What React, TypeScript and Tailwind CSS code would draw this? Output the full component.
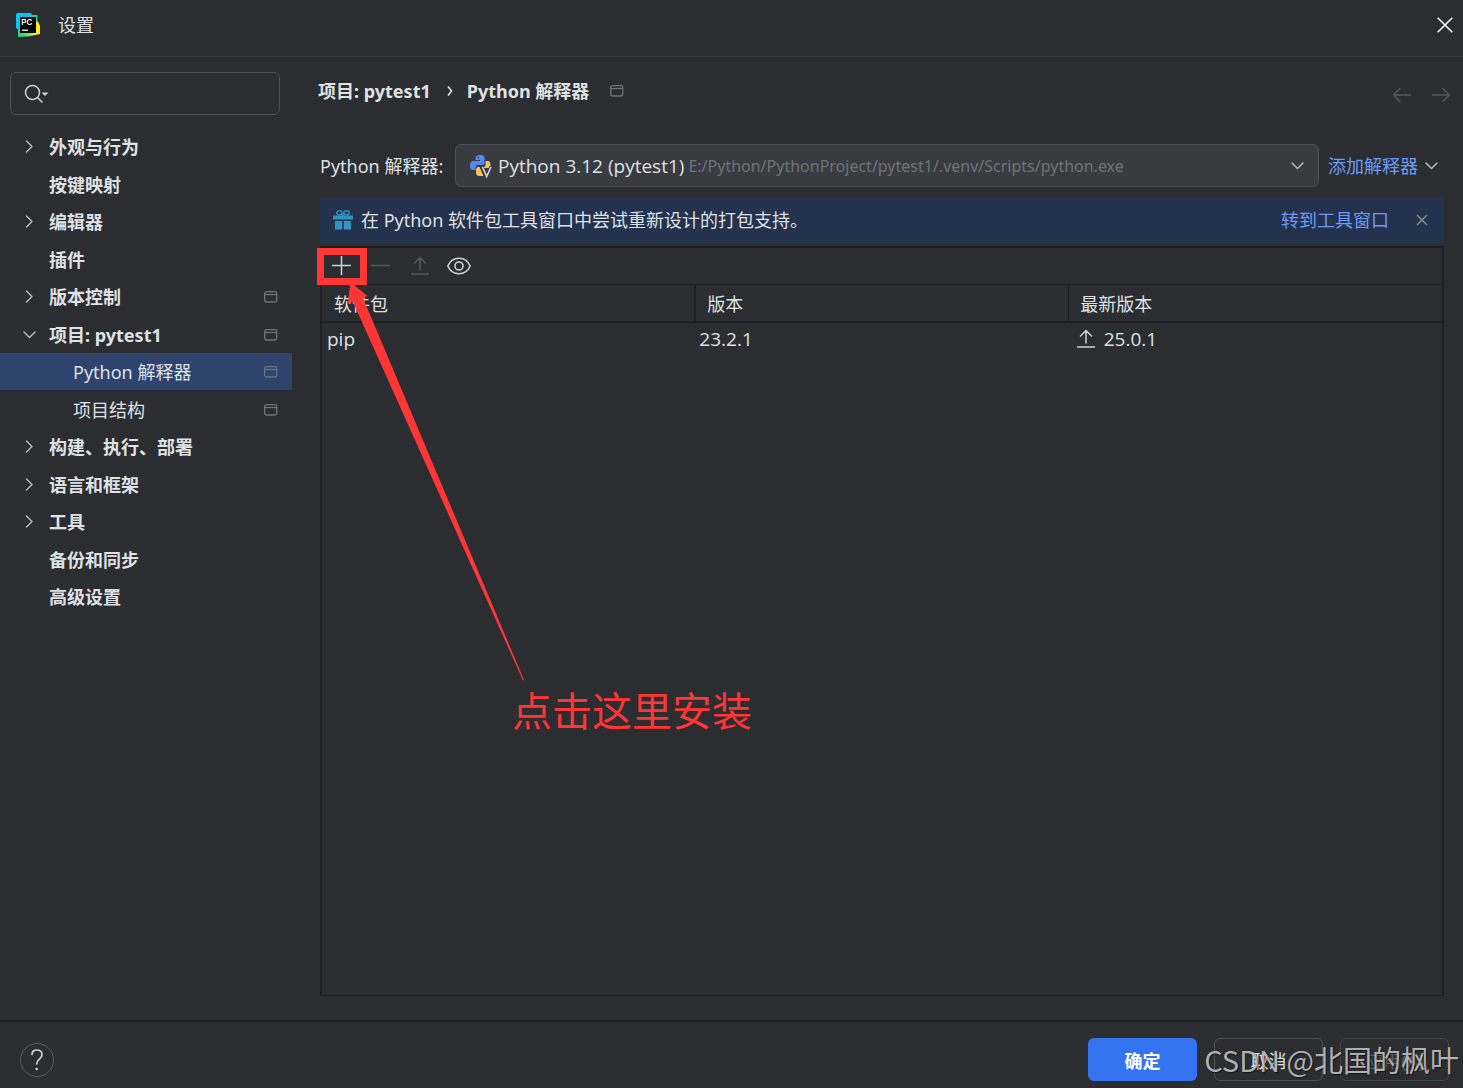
import type { ReactNode } from "react";

type TreeItem = {
  label: string;
  arrow?: "right" | "down";
  badge?: boolean;
  child?: boolean;
  selected?: boolean;
};

const items: TreeItem[] = [
  { label: "外观与行为", arrow: "right" },
  { label: "按键映射" },
  { label: "编辑器", arrow: "right" },
  { label: "插件" },
  { label: "版本控制", arrow: "right", badge: true },
  { label: "项目: pytest1", arrow: "down", badge: true },
  { label: "Python 解释器", child: true, selected: true, badge: true },
  { label: "项目结构", child: true, badge: true },
  { label: "构建、执行、部署", arrow: "right" },
  { label: "语言和框架", arrow: "right" },
  { label: "工具", arrow: "right" },
  { label: "备份和同步" },
  { label: "高级设置" },
];

function Chevron({ dir }: { dir: "right" | "down" }) {
  return (
    <svg className="size-4 shrink-0" viewBox="0 0 16 16" fill="none" stroke="#b4b8bf" strokeWidth="1.5" strokeLinecap="round" strokeLinejoin="round" aria-hidden="true">
      <path d={dir === "right" ? "M5.500 2 11 7.500 5.500 13" : "M3 5l5.500 5.500L14 5"} />
    </svg>
  );
}

function ScopeIcon() {
  return (
    <svg className="h-3 w-[14px] shrink-0" viewBox="0 0 14 12" fill="none" stroke="#6f737a" strokeWidth="1.300" aria-hidden="true">
      <rect x=".7" y=".7" width="12" height="10.300" rx="1.800" />
      <path d="M.7 3.500h12" />
    </svg>
  );
}

function UploadIcon({ color }: { color: string }) {
  return (
    <svg className="size-5 shrink-0" viewBox="0 0 20 20" fill="none" stroke={color} strokeWidth="1.500" strokeLinecap="round" strokeLinejoin="round" aria-hidden="true">
      <path d="M10 14V1.500M4.500 7 10 1.500 15.500 7M1.500 18h17" />
    </svg>
  );
}

function AppLogo() {
  return (
    <svg className="size-6" viewBox="0 0 24 24" aria-hidden="true">
      <defs>
        <linearGradient id="logo-green" x1="0" y1="1" x2="1" y2="0.400">
          <stop offset="0" stopColor="#12d68b" />
          <stop offset=".3" stopColor="#4bdc62" />
          <stop offset=".65" stopColor="#f0f020" />
          <stop offset="1" stopColor="#fcee1a" />
        </linearGradient>
      </defs>
      <path d="M14 2h7.500v7L14 12z" fill="#1fd78c" />
      <path d="M2 14 20 9l2-.5 2 4.500v8l-12 2.500L2 24z" fill="url(#logo-green)" />
      <path d="M0 1.500Q0 0 1.500 0H15l2 4-13 14-4-3z" fill="#0bc4f5" />
      <rect x="4" y="4" width="16" height="16" fill="#000" />
      <path d="M6 17.200h6" stroke="#fff" strokeWidth="1.300" />
      <text x="5.300" y="12" fill="#fff" fontFamily="Inter, sans-serif" fontSize="8" fontWeight="600">PC</text>
    </svg>
  );
}

function PythonIcon() {
  return (
    <svg className="size-6 shrink-0" viewBox="0 0 24 24" aria-hidden="true">
      <path d="M6.500 3.500Q6.500 1 11 1t4.500 2.500V9q0 2-2.500 2H9q-2.500 0-2.500 3v2H4Q1 16 1 11.500T4 7h7V6H6.500z" fill="#548af7" />
      <circle cx="9" cy="3.500" r=".9" fill="#34507f" />
      <path d="M16.500 7H19q2.500 0 2.500 4.500 0 1.500-.3 2.500H13l1.500 8H11q-4 0-4-3v-3.500q0-2.500 2.500-2.500H14q2.500 0 2.500-2.500z" fill="#f2c55c" />
      <path d="M12.500 12.500 17.500 24l5-11.500" fill="none" stroke="#393b40" strokeWidth="4" />
      <path d="M13.500 13 17.700 22.500 22 13" fill="none" stroke="#ced0d6" strokeWidth="1.700" />
    </svg>
  );
}

function ToolButton({ label, disabled, children }: { label: string; disabled?: boolean; children: ReactNode }) {
  return (
    <button type="button" aria-label={label} disabled={disabled} className="flex size-6 items-center justify-center">
      {children}
    </button>
  );
}

export default function App() {
  return (
    <div className="relative flex min-h-screen flex-col overflow-hidden bg-[#2b2d30] font-['Noto_Sans','Noto_Sans_CJK_SC',sans-serif] text-[18px] leading-6 text-[#dfe1e5]">
      <header className="flex h-[57px] items-center justify-between border-b border-[#393b40] pr-2 pb-[6px] pl-4">
        <div className="flex items-center gap-[18px]">
          <AppLogo />
          <h1>设置</h1>
        </div>
        <button type="button" aria-label="关闭" className="flex size-5 items-center justify-center">
          <svg className="size-4" viewBox="0 0 16 16" stroke="#fff" strokeWidth="1.500" aria-hidden="true">
            <path d="m.7.7 14.600 14.600M15.300.7.7 15.300" />
          </svg>
        </button>
      </header>

      <div className="flex flex-1">
        <aside className="w-[292px] shrink-0 pt-[15px]">
          <label className="mr-3 ml-[10px] flex h-[43px] items-center rounded-md border border-[#4e5157] pl-[13px]">
            <svg className="h-5 w-[26px] shrink-0" viewBox="0 0 26 20" fill="none" aria-hidden="true">
              <circle cx="8.500" cy="8.500" r="7" stroke="#ced0d6" strokeWidth="1.500" />
              <path d="m13.500 13.500 5 5" stroke="#ced0d6" strokeWidth="1.500" />
              <path d="M17.500 8.500h7l-3.500 3.500z" fill="#ced0d6" />
            </svg>
            <input type="search" aria-label="搜索" className="min-w-0 flex-1 bg-transparent px-2 outline-none" />
          </label>
          <nav aria-label="设置" className="mt-[13px]">
            <ul>
              {items.map((it) => (
                <li key={it.label} className="mb-px last:mb-0 nth-[2n]:mb-0">
                  <a
                    href="#"
                    aria-current={it.selected ? "page" : undefined}
                    className={`flex h-[37px] items-center pr-[14px] ${it.child ? "pl-[73px]" : "pl-[21px] font-bold"} ${it.selected ? "bg-[#2e436e]" : ""}`}
                  >
                    {!it.child && <span className="mr-3 flex size-4 items-center">{it.arrow && <Chevron dir={it.arrow} />}</span>}
                    <span className="flex-1">{it.label}</span>
                    {it.badge && <ScopeIcon />}
                  </a>
                </li>
              ))}
            </ul>
          </nav>
        </aside>

        <main className="flex min-w-0 flex-1 flex-col pr-[19px] pb-6 pl-7">
          <div className="-ml-0.5 flex h-[70px] items-center justify-between">
            <div className="flex items-center pb-0.5 font-bold">
              <span>项目: pytest1</span>
              <svg className="mr-[14px] ml-4 h-3 w-[6px]" viewBox="0 0 6 12" fill="none" stroke="#dfe1e5" strokeWidth="1.600" aria-hidden="true">
                <path d="m1 1.500 3.500 4.500L1 10.500" />
              </svg>
              <span className="mr-[21px]">Python 解释器</span>
              <ScopeIcon />
            </div>
            <div className="-mr-[7px] flex gap-[19px] pt-[6px]">
              {["后退", "前进"].map((label, i) => (
                <button key={label} type="button" aria-label={label} disabled className="size-5">
                  <svg viewBox="0 0 20 20" fill="none" stroke="#55585e" strokeWidth="1.500" strokeLinecap="round" strokeLinejoin="round" aria-hidden="true">
                    <path d={i === 0 ? "M18.500 10h-17M8 3.500 1.500 10 8 16.500" : "M1.500 10h17M12 3.500l6.500 6.500-6.500 6.500"} />
                  </svg>
                </button>
              ))}
            </div>
          </div>

          <div className="mt-[17px] mr-[5px] flex h-[43px] items-center whitespace-nowrap">
            <span className="w-[135px] shrink-0">Python 解释器:</span>
            <button type="button" aria-haspopup="listbox" className="flex h-[43px] min-w-0 flex-1 items-center rounded-md border border-[#4e5157] bg-[#393b40] px-[13px] text-left">
              <PythonIcon />
              <span className="ml-[5px] font-['Open_Sans',sans-serif] text-[19px]">Python 3.12 (pytest1)</span>
              <span className="ml-1 flex-1 truncate text-[16px] text-[#6f737a]">E:/Python/PythonProject/pytest1/.venv/Scripts/python.exe</span>
              <Chevron dir="down" />
            </button>
            <button type="button" className="ml-[9px] flex items-center gap-[5px] text-[#6b9bfa]">
              添加解释器
              <Chevron dir="down" />
            </button>
          </div>

          <div className="mt-[10px] flex h-[46px] items-center bg-[#25324d] pr-[14px] pl-[13px]">
            <svg className="mr-2 size-5" viewBox="0 0 20 20" fill="none" aria-hidden="true">
              <path d="M0 5.500h20v4H0zM2 11h7.200v8.500H2zM10.800 11H18v8.500h-7.200z" fill="#3592c4" />
              <ellipse cx="6.500" cy="2.800" rx="2.700" ry="2.100" stroke="#3592c4" strokeWidth="1.400" />
              <ellipse cx="13.500" cy="2.800" rx="2.700" ry="2.100" stroke="#3592c4" strokeWidth="1.400" />
              <path d="m8.500 4 1.500 1.500L11.500 4" stroke="#3592c4" strokeWidth="1.400" />
            </svg>
            <span className="flex-1">在 Python 软件包工具窗口中尝试重新设计的打包支持。</span>
            <a href="#" className="text-[#6b9bfa]">转到工具窗口</a>
            <button type="button" aria-label="关闭通知" className="ml-[25px] flex size-4 items-center justify-center">
              <svg className="size-3" viewBox="0 0 12 12" stroke="#868a91" strokeWidth="1.500" aria-hidden="true">
                <path d="m1 1 10 10M11 1 1 11" />
              </svg>
            </button>
          </div>

          <section className="mt-[3px] flex flex-1 flex-col border-2 border-b border-[#1e1f22]">
            <div className="flex h-[37px] items-center gap-[15px] border-b border-[#1e1f22] pl-2">
              <div className="relative size-6">
                <ToolButton label="安装">
                  <svg className="size-5" viewBox="0 0 20 20" stroke="#ced0d6" strokeWidth="1.500" aria-hidden="true">
                    <path d="M9.500 0v19M0 9.500h19" />
                  </svg>
                </ToolButton>
                <div className="pointer-events-none absolute -top-[6px] -left-[13px] h-[37px] w-[50px] border-[7px] border-[#ff3636]" />
                <svg className="pointer-events-none absolute top-[31px] left-[18px] z-10 h-[396px] w-[177px]" viewBox="0 0 177 396" fill="#ff3636" aria-hidden="true">
                  <path d="M2 0h4l13.500 11-4.500 2L176 395l-1 .5L5 17l-5 1z" />
                </svg>
                <p className="absolute top-[427px] left-[182px] z-10 text-[40px] leading-[60px] whitespace-nowrap text-[#ff3636]">点击这里安装</p>
              </div>
              <ToolButton label="卸载" disabled>
                <svg className="size-5" viewBox="0 0 20 20" stroke="#55585e" strokeWidth="1.500" aria-hidden="true">
                  <path d="M0 9.500h19" />
                </svg>
              </ToolButton>
              <ToolButton label="升级" disabled>
                <UploadIcon color="#55585e" />
              </ToolButton>
              <ToolButton label="显示早期版本">
                <svg className="size-6" viewBox="0 0 24 24" fill="none" stroke="#ced0d6" strokeWidth="1.600" aria-hidden="true">
                  <path d="M.8 12C3 7 7 4.200 12 4.200S21 7 23.200 12C21 17 17 19.800 12 19.800S3 17 .8 12z" />
                  <circle cx="12" cy="12" r="4" />
                </svg>
              </ToolButton>
            </div>
            <table className="w-full table-fixed border-collapse text-left">
              <thead>
                <tr className="h-[37px] border-b-2 border-[#1e1f22]">
                  <th className="border-r-2 border-[#1e1f22] pt-0.5 pl-3 font-normal">软件包</th>
                  <th className="border-r border-[#1e1f22] pt-0.5 pl-[11px] font-normal">版本</th>
                  <th className="pt-0.5 pl-[11px] font-normal">最新版本</th>
                </tr>
              </thead>
              <tbody className="font-['Open_Sans',sans-serif] text-[19px]">
                <tr className="h-8">
                  <td className="pl-[5px]">pip</td>
                  <td className="pl-1">23.2.1</td>
                  <td className="pl-[7px]">
                    <span className="flex items-center gap-2">
                      <UploadIcon color="#ced0d6" />
                      25.0.1
                    </span>
                  </td>
                </tr>
              </tbody>
            </table>
          </section>
        </main>
      </div>

      <footer className="flex h-[68px] items-center justify-between border-t-2 border-[#1e1f22] pt-3 pr-[14px] pb-[3px] pl-5">
        <button type="button" aria-label="帮助" className="flex size-[34px] items-center justify-center rounded-full border border-[#5a5d63]">
          <svg className="h-[22px] w-3" viewBox="0 0 12 22" fill="none" stroke="#ced0d6" strokeWidth="1.700" strokeLinecap="round" aria-hidden="true">
            <path d="M1 5.500C1 2.500 3.300 1 6 1s5 1.700 5 4.700c0 4.500-5.300 4.500-5.300 9.300" />
            <circle cx="5.700" cy="20" r=".5" fill="#ced0d6" />
          </svg>
        </button>
        <div className="flex gap-[17px]">
          <button type="button" className="h-[43px] w-[109px] rounded-md bg-[#3574f0] pt-0.5 font-bold text-white">确定</button>
          <button type="button" className="h-[43px] w-[109px] rounded-md border border-[#4e5157] pt-0.5">取消</button>
          <button type="button" disabled className="h-[43px] w-[109px] rounded-md border border-[#43454a] pt-0.5 text-[#5a5d63]">应用(A)</button>
        </div>
      </footer>

      <p className="pointer-events-none absolute right-1 bottom-[6px] z-10 font-['Noto_Sans_CJK_SC',sans-serif] text-[29px] leading-[46px] whitespace-nowrap text-[#c4c4c4]/90 [text-shadow:1px_1px_1px_#0008]">CSDN @北国的枫叶</p>
    </div>
  );
}
